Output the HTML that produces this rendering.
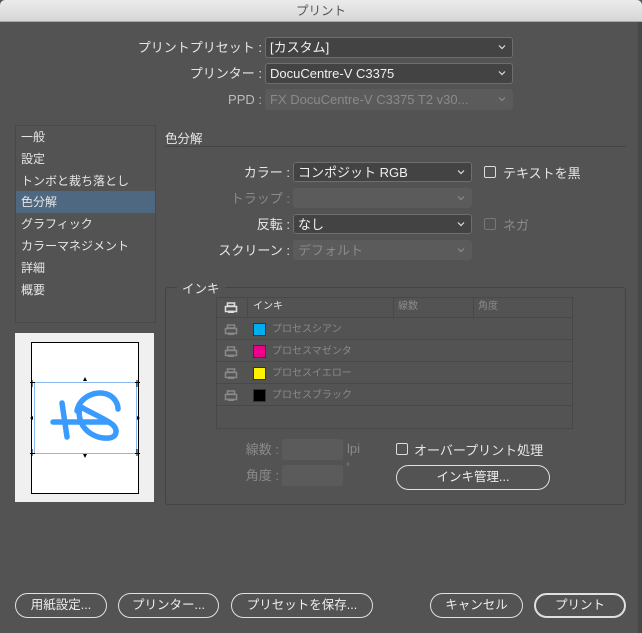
<!DOCTYPE html><html><head><meta charset="utf-8"><style>
*{box-sizing:border-box;margin:0;padding:0}
body{width:642px;height:633px;background:#535353;font-family:"Liberation Sans","Noto Sans CJK JP",sans-serif;font-size:13px;color:#e6e6e6;position:relative;overflow:hidden}
.a{position:absolute;white-space:nowrap}
.tb{left:0;top:0;width:642px;height:22px;background:linear-gradient(#ececec,#d6d6d6);border-bottom:1px solid #a8a8a8;color:#555;text-align:center;line-height:22px;font-size:12.5px;border-radius:5px 5px 0 0}
.lbl{text-align:right;line-height:21px}
.dd{background:#434343;border:1px solid #6e6e6e;border-radius:3px;padding-left:4px;line-height:19px;color:#f0f0f0}
.dd.dis{background:#5b5b5b;border-color:#5b5b5b;color:#8a8a8a}
.dd svg{position:absolute;right:6px;top:6px}
.chk{width:12px;height:12px;border:1px solid #ddd;border-radius:2px}
.dim{color:#8a8a8a}
.li{left:21px;font-size:12px;line-height:22px}
.btn{border:1px solid #e0e0e0;border-radius:13px;text-align:center;line-height:22px;font-size:12.5px;color:#eee}
.row{left:216px;width:357px;height:22px;border-bottom:1px solid #484848}
.sw{width:13px;height:13px;border:1px solid #333}
</style></head><body>
<svg width="0" height="0" style="position:absolute"><defs>
<symbol id="cv" viewBox="0 0 8 6"><path d="M1 1.5l3 3 3-3" fill="none" stroke="currentColor" stroke-width="1.2"/></symbol>
<symbol id="pr" viewBox="0 0 14 12"><path d="M3.5 1h7v3h-7z M1.5 4.5h11v5h-11z" fill="none" stroke="currentColor" stroke-width="1.6"/><path d="M4 8.5h6v2.5h-6z" fill="currentColor"/></symbol>
</defs></svg>
<div class="a tb">プリント</div>
<div class="a" style="right:0;top:22px;width:4px;height:611px;background:#484848"></div>

<div class="a lbl" style="left:100px;width:162px;top:37px">プリントプリセット :</div>
<div class="a dd" style="left:265px;top:37px;width:248px;height:21px">[カスタム]<svg width="8" height="6" style="color:#ddd"><use href="#cv"/></svg></div>
<div class="a lbl" style="left:100px;width:162px;top:63px">プリンター :</div>
<div class="a dd" style="left:265px;top:63px;width:248px;height:21px">DocuCentre-V C3375<svg width="8" height="6" style="color:#ddd"><use href="#cv"/></svg></div>
<div class="a lbl" style="left:100px;width:162px;top:89px;color:#bbb">PPD :</div>
<div class="a dd dis" style="left:265px;top:89px;width:248px;height:21px">FX DocuCentre-V C3375 T2 v30...<svg width="8" height="6" style="color:#8a8a8a"><use href="#cv"/></svg></div>

<div class="a" style="left:15px;top:125px;width:141px;height:198px;border:1px solid #494949"></div>
<div class="a" style="left:16px;top:191px;width:139px;height:22px;background:#4e6881"></div>
<div class="a li" style="top:126px">一般</div>
<div class="a li" style="top:148px">設定</div>
<div class="a li" style="top:170px">トンボと裁ち落とし</div>
<div class="a li" style="top:191px">色分解</div>
<div class="a li" style="top:213px">グラフィック</div>
<div class="a li" style="top:235px">カラーマネジメント</div>
<div class="a li" style="top:257px">詳細</div>
<div class="a li" style="top:279px">概要</div>

<div class="a" style="left:15px;top:333px;width:139px;height:169px;background:#f0f0f0"></div>
<svg class="a" style="left:15px;top:333px" width="139" height="169">
<rect x="16.5" y="9.5" width="107" height="151" fill="#fff" stroke="#000"/>
<rect x="19.5" y="49.5" width="102" height="71" fill="none" stroke="#8ab8f0"/>
<g stroke="#000" stroke-width="1"><path d="M17 47v7M122 47v7M17 116v7M122 116v7M15 49.5h5M120 49.5h5M15 120.5h5M120 120.5h5"/></g>
<path d="M70 44l-2 4h4zM70 125l-2 -4h4zM15 85l3-2v4zM125 85l-3-2v4z" fill="#000"/>
<g stroke="#3a9bff" stroke-width="5.5" fill="none" stroke-linecap="round" stroke-linejoin="round">
<path d="M47 70l5 34"/>
<path d="M38 89h56"/>
<path d="M62 78c2-14 20-22 32-16c6 3 9 9 9 14"/>
<path d="M66 74c10 6 25 12 32 18c5 5 4 12-4 13c-9 1-20-3-26-12c-3-5-5-12-3-18"/>
</g></svg>

<div class="a" style="left:165px;top:128px;font-size:12.5px">色分解</div>
<div class="a" style="left:165px;top:146px;width:461px;height:1px;background:#444"></div>

<div class="a lbl" style="left:190px;width:100px;top:162px">カラー :</div>
<div class="a dd" style="left:293px;top:162px;width:179px;height:20px">コンポジット RGB<svg width="8" height="6" style="color:#ddd"><use href="#cv"/></svg></div>
<div class="a chk" style="left:484px;top:166px"></div>
<div class="a" style="left:503px;top:163px">テキストを黒</div>
<div class="a lbl dim" style="left:190px;width:100px;top:188px">トラップ :</div>
<div class="a dd dis" style="left:293px;top:188px;width:179px;height:20px"><svg width="8" height="6" style="color:#8a8a8a"><use href="#cv"/></svg></div>
<div class="a lbl" style="left:190px;width:100px;top:214px">反転 :</div>
<div class="a dd" style="left:293px;top:214px;width:179px;height:20px">なし<svg width="8" height="6" style="color:#ddd"><use href="#cv"/></svg></div>
<div class="a chk" style="left:484px;top:218px;border-color:#777"></div>
<div class="a dim" style="left:503px;top:215px">ネガ</div>
<div class="a lbl" style="left:190px;width:100px;top:240px">スクリーン :</div>
<div class="a dd dis" style="left:293px;top:240px;width:179px;height:20px">デフォルト<svg width="8" height="6" style="color:#8a8a8a"><use href="#cv"/></svg></div>

<div class="a" style="left:165px;top:287px;width:461px;height:218px;border:1px solid #444;border-radius:3px"></div>
<div class="a" style="left:177px;top:278px;background:#535353;padding:0 5px;font-size:12.5px">インキ</div>

<div class="a" style="left:216px;top:297px;width:357px;height:132px;border:1px solid #484848"></div>
<div class="a row" style="top:297px;height:21px"></div>
<div class="a" style="left:247px;top:297px;width:1px;height:21px;background:#484848"></div>
<div class="a" style="left:393px;top:297px;width:1px;height:21px;background:#484848"></div>
<div class="a" style="left:473px;top:297px;width:1px;height:21px;background:#484848"></div>
<svg class="a" style="left:224px;top:302px;color:#ddd" width="14" height="12"><use href="#pr"/></svg>
<div class="a" style="left:253px;top:299px;font-size:10px;line-height:16px">インキ</div>
<div class="a dim" style="left:398px;top:299px;font-size:10px;line-height:16px">線数</div>
<div class="a dim" style="left:478px;top:299px;font-size:10px;line-height:16px">角度</div>

<div class="a row" style="top:318px"></div>
<div class="a row" style="top:340px"></div>
<div class="a row" style="top:362px"></div>
<div class="a row" style="top:384px"></div>
<svg class="a" style="left:224px;top:324px;color:#888" width="14" height="12"><use href="#pr"/></svg>
<svg class="a" style="left:224px;top:346px;color:#888" width="14" height="12"><use href="#pr"/></svg>
<svg class="a" style="left:224px;top:368px;color:#888" width="14" height="12"><use href="#pr"/></svg>
<svg class="a" style="left:224px;top:390px;color:#888" width="14" height="12"><use href="#pr"/></svg>
<div class="a sw" style="left:253px;top:323px;background:#00aeef"></div>
<div class="a sw" style="left:253px;top:345px;background:#ec008c"></div>
<div class="a sw" style="left:253px;top:367px;background:#fff200"></div>
<div class="a sw" style="left:253px;top:389px;background:#000"></div>
<div class="a dim" style="left:272px;top:322px;font-size:10px;line-height:16px">プロセスシアン</div>
<div class="a dim" style="left:272px;top:344px;font-size:10px;line-height:16px">プロセスマゼンタ</div>
<div class="a dim" style="left:272px;top:366px;font-size:10px;line-height:16px">プロセスイエロー</div>
<div class="a dim" style="left:272px;top:388px;font-size:10px;line-height:16px">プロセスブラック</div>

<div class="a lbl dim" style="left:230px;width:49px;top:439px">線数 :</div>
<div class="a" style="left:282px;top:439px;width:61px;height:21px;background:#5b5b5b;border-radius:2px"></div>
<div class="a dim" style="left:347px;top:441px">lpi</div>
<div class="a lbl dim" style="left:230px;width:49px;top:465px">角度 :</div>
<div class="a" style="left:282px;top:465px;width:61px;height:21px;background:#5b5b5b;border-radius:2px"></div>
<div class="a dim" style="left:346px;top:462px;font-size:10px">°</div>
<div class="a chk" style="left:396px;top:443px"></div>
<div class="a" style="left:414px;top:440px">オーバープリント処理</div>
<div class="a btn" style="left:396px;top:465px;width:154px;height:25px;line-height:23px">インキ管理...</div>

<div class="a btn" style="left:15px;top:593px;width:92px;height:25px">用紙設定...</div>
<div class="a btn" style="left:118px;top:593px;width:101px;height:25px">プリンター...</div>
<div class="a btn" style="left:231px;top:593px;width:142px;height:25px">プリセットを保存...</div>
<div class="a btn" style="left:430px;top:593px;width:93px;height:25px">キャンセル</div>
<div class="a btn" style="left:534px;top:593px;width:92px;height:25px;border-width:2px;line-height:21px">プリント</div>
</body></html>
